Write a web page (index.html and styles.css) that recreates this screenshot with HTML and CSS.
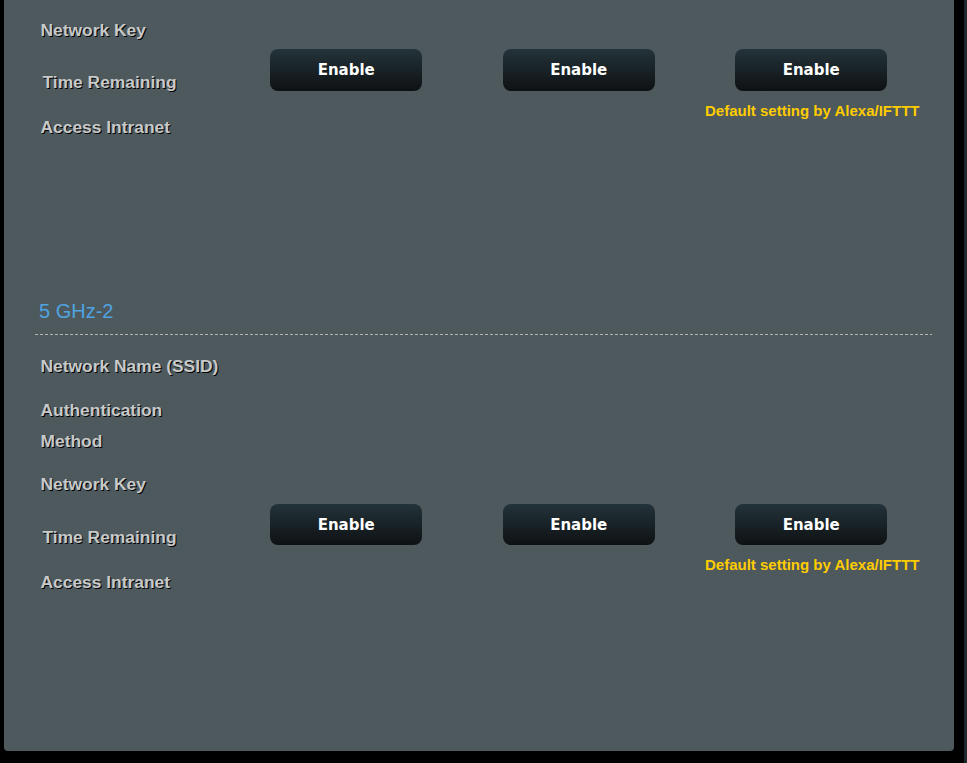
FILE: index.html
```html
<!DOCTYPE html>
<html>
<head>
<meta charset="utf-8">
<title>Wireless Settings</title>
<link rel="stylesheet" href="styles.css">
</head>
<body>
<div class="screen">
  <main class="panel">
    <section class="band band-first">
      <div class="rows">
        <div class="row"><div class="lbl">Network Key</div></div>
        <div class="row row-ctrl">
          <div class="lbl lbl-tr">Time Remaining</div>
          <div class="ctrls">
            <div class="cell"><button class="btn">Enable</button></div>
            <div class="cell"><button class="btn">Enable</button></div>
            <div class="cell"><button class="btn">Enable</button><div class="note">Default setting by Alexa/IFTTT</div></div>
          </div>
        </div>
        <div class="row"><div class="lbl">Access Intranet</div></div>
      </div>
    </section>

    <section class="band band-second">
      <h2 class="band-title">5 GHz-2</h2>
      <div class="dash"></div>
      <div class="rows rows-top">
        <div class="row"><div class="lbl">Network Name (SSID)</div></div>
        <div class="row"><div class="lbl lbl-wrap">Authentication<br>Method</div></div>
        <div class="row"><div class="lbl">Network Key</div></div>
        <div class="row row-ctrl">
          <div class="lbl lbl-tr">Time Remaining</div>
          <div class="ctrls">
            <div class="cell"><button class="btn">Enable</button></div>
            <div class="cell"><button class="btn">Enable</button></div>
            <div class="cell"><button class="btn">Enable</button><div class="note">Default setting by Alexa/IFTTT</div></div>
          </div>
        </div>
        <div class="row"><div class="lbl">Access Intranet</div></div>
      </div>
    </section>
  </main>
  <div class="edge"></div>
</div>
</body>
</html>
```

FILE: styles.css
```css
html, body {
  margin: 0;
  padding: 0;
  background: #000;
  height: 100%;
  overflow: hidden;
}

.screen {
  display: flex;
  align-items: flex-start;
  height: 763px;
}

.panel {
  margin-left: 4px;
  width: 950px;
  box-sizing: border-box;
  background: #4d595d;
  border-radius: 0 0 4px 4px;
  padding: 14.5px 22px 153px 31px;
  font-family: "Liberation Sans", Arial, sans-serif;
}

.edge {
  margin-left: auto;
  width: 3px;
  height: 100%;
  background: #1f282c;
}

.band-second {
  margin-top: 155.5px;
}

.band-title {
  margin: 0 0 11.1px 4px;
  font-size: 20px;
  line-height: 24px;
  font-weight: normal;
  color: #4fa3e0;
}

.dash {
  height: 1px;
  background: repeating-linear-gradient(to right, #b4b4b4 0 3px, transparent 3px 5px);
}

.rows {
  display: flex;
  flex-direction: column;
  gap: 12.5px;
}

.rows-top {
  padding-top: 16.5px;
}

.row {
  display: flex;
  align-items: center;
  min-height: 31px;
}

.row-ctrl {
  height: 31px;
  margin-top: 9px;
  margin-bottom: 1.5px;
}

.lbl {
  width: 195px;
  box-sizing: border-box;
  padding-left: 5.5px;
  font-size: 17.4px;
  font-weight: bold;
  line-height: 31px;
  color: #c8c9c9;
  text-shadow: 1px 1px 0 #000;
  flex-shrink: 0;
}

.lbl-tr {
  padding-left: 7.5px;
}

.ctrls {
  display: grid;
  grid-template-columns: repeat(3, 232.5px);
  align-items: start;
  margin-top: 4px;
}

.cell {
  display: flex;
  flex-direction: column;
  align-items: center;
}

.btn {
  width: 152px;
  height: 41.5px;
  border: 0;
  border-radius: 8px;
  background: linear-gradient(#23333a, #0e1113);
  color: #fff;
  font-family: "DejaVu Sans", Verdana, sans-serif;
  font-weight: bold;
  font-size: 15px;
  padding: 0;
  cursor: pointer;
}

.note {
  margin-top: 11px;
  line-height: 18px;
  font-size: 15px;
  font-weight: bold;
  color: #ffcc00;
  white-space: nowrap;
  margin-left: 2px;
}
```
